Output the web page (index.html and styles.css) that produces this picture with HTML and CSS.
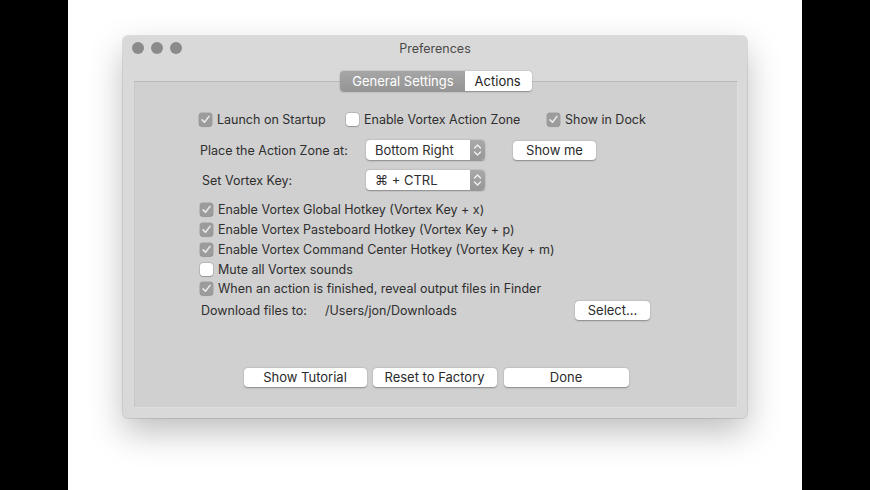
FILE: index.html
```html
<!DOCTYPE html>
<html>
<head>
<meta charset="utf-8">
<link rel="stylesheet" href="styles.css">
</head>
<body>
<div class="stage">
  <div class="bar"></div>
  <div class="desk">
    <div class="window">
      <div class="titlebar">
        <div class="lights"><span class="light"></span><span class="light"></span><span class="light"></span></div>
        <div class="title">Preferences</div>
      </div>
      <div class="tabbox">
        <div class="segmented">
          <span class="seg seg-on">General Settings</span><span class="seg">Actions</span>
        </div>
        <div class="row row1">
          <label class="check c1"><span class="box on"><svg viewBox="0 0 14 14"><path d="M3.3 7.4 L5.9 10 L10.8 3.6" /></svg></span>Launch on Startup</label>
          <label class="check c2"><span class="box"></span>Enable Vortex Action Zone</label>
          <label class="check"><span class="box on"><svg viewBox="0 0 14 14"><path d="M3.3 7.4 L5.9 10 L10.8 3.6" /></svg></span>Show in Dock</label>
        </div>
        <div class="row row2">
          <span class="label l-zone">Place the Action Zone at:</span>
          <span class="popup"><span class="popup-text">Bottom Right</span><span class="stepper"><svg viewBox="0 0 15 20"><path d="M4.5 8 L7.5 5 L10.5 8 M4.5 12 L7.5 15 L10.5 12"/></svg></span></span>
          <span class="btn btn-show">Show me</span>
        </div>
        <div class="row row3">
          <span class="label l-key">Set Vortex Key:</span>
          <span class="popup"><span class="popup-text">⌘ + CTRL</span><span class="stepper"><svg viewBox="0 0 15 20"><path d="M4.5 8 L7.5 5 L10.5 8 M4.5 12 L7.5 15 L10.5 12"/></svg></span></span>
        </div>
        <div class="list">
          <label class="check lrow"><span class="box on"><svg viewBox="0 0 14 14"><path d="M3.3 7.4 L5.9 10 L10.8 3.6" /></svg></span>Enable Vortex Global Hotkey (Vortex Key + x)</label>
          <label class="check lrow"><span class="box on"><svg viewBox="0 0 14 14"><path d="M3.3 7.4 L5.9 10 L10.8 3.6" /></svg></span>Enable Vortex Pasteboard Hotkey (Vortex Key + p)</label>
          <label class="check lrow"><span class="box on"><svg viewBox="0 0 14 14"><path d="M3.3 7.4 L5.9 10 L10.8 3.6" /></svg></span>Enable Vortex Command Center Hotkey (Vortex Key + m)</label>
          <label class="check lrow"><span class="box"></span>Mute all Vortex sounds</label>
          <label class="check lrow"><span class="box on"><svg viewBox="0 0 14 14"><path d="M3.3 7.4 L5.9 10 L10.8 3.6" /></svg></span>When an action is finished, reveal output files in Finder</label>
        </div>
        <div class="row row-dl">
          <span class="label l-dl">Download files to:</span>
          <span class="path">/Users/jon/Downloads</span>
          <span class="btn btn-select">Select...</span>
        </div>
        <div class="actions">
          <span class="btn btn-a1">Show Tutorial</span>
          <span class="btn btn-a2">Reset to Factory</span>
          <span class="btn btn-a3">Done</span>
        </div>
      </div>
    </div>
  </div>
  <div class="bar"></div>
</div>
</body>
</html>
```

FILE: styles.css
```css
html, body {
  margin: 0;
  padding: 0;
  background: #ffffff;
}
body {
  font-family: Inter, "Liberation Sans", sans-serif;
  font-size: 12.5px;
  color: #2e2e2e;
}
.stage {
  display: flex;
  width: 870px;
  height: 490px;
  overflow: hidden;
}
.bar {
  width: 68px;
  flex: none;
  background: #000;
}
.desk {
  flex: 1;
  background: #fff;
  padding: 36px 0 0 55px;
  box-sizing: border-box;
}
.window {
  width: 624px;
  height: 382px;
  box-sizing: border-box;
  background: #d9d9d9;
  border-radius: 5px;
  box-shadow: 0 14px 34px rgba(0,0,0,0.26), 0 0 0 1px rgba(0,0,0,0.10);
  display: flex;
  flex-direction: column;
  padding: 0 9px 10px 11px;
}
.titlebar {
  height: 24px;
  display: flex;
  align-items: center;
  position: relative;
  margin: 0 -9px 0 -11px;
  padding-left: 9px;
}
.lights {
  display: flex;
  gap: 7px;
}
.light {
  width: 12px;
  height: 12px;
  border-radius: 50%;
  background: #8b8b8b;
}
.title {
  position: absolute;
  left: 0;
  right: 0;
  text-align: center;
  font-size: 12.5px;
  color: #4a4a4a;
  top: 5px;
}
.tabbox {
  margin-top: 21px;
  flex: 1;
  background: #d0d0d0;
  border-top: 1px solid #b9b9b9;
  border-left: 1px solid #c8c8c8;
  border-right: 1px solid #dedede;
  border-bottom: 1px solid #dedede;
  display: flex;
  flex-direction: column;
  padding-left: 64px;
}
.segmented {
  align-self: center;
  margin-left: -64px;
  margin-top: -11px;
  height: 20px;
  display: flex;
  border-radius: 4px;
  box-shadow: 0 0.5px 1.5px rgba(0,0,0,0.35);
  overflow: hidden;
}
.seg {
  background: #fff;
  color: #222;
  padding: 0 11px 0 10px;
  line-height: 20px;
  font-size: 13px;
}
.seg-on {
  background: linear-gradient(#a6a6a6, #959595);
  color: #fff;
  padding: 0 11px 0 12px;
}
.row {
  display: flex;
  align-items: center;
  height: 20px;
}
.row1 { margin-top: 18px; }
.row2 { margin-top: 11px; }
.row3 { margin-top: 10px; }
.check {
  display: flex;
  align-items: center;
  white-space: nowrap;
}
.c1 { width: 147px; }
.c2 { width: 201px; }
.box {
  width: 13px;
  height: 13px;
  box-sizing: border-box;
  border-radius: 3px;
  background: #fff;
  margin-right: 5px;
  box-shadow: 0 0 0 0.5px rgba(0,0,0,0.2), 0 0.5px 1px rgba(0,0,0,0.2);
  flex: none;
}
.box.on {
  background: #9c9c9c;
}
.box svg {
  width: 13px;
  height: 13px;
  display: block;
}
.box svg path {
  fill: none;
  stroke: #ededed;
  stroke-width: 1.6;
  stroke-linecap: round;
  stroke-linejoin: round;
}
.label {
  white-space: nowrap;
}
.l-zone { width: 166px; margin-left: 1px; }
.l-key { width: 164px; margin-left: 3px; }
.popup {
  width: 119px;
  height: 20px;
  border-radius: 4px;
  background: #fff;
  box-shadow: 0 0.5px 1.5px rgba(0,0,0,0.35);
  display: flex;
  overflow: hidden;
}
.popup-text {
  flex: 1;
  padding-left: 9px;
  line-height: 20px;
  font-size: 13px;
}
.stepper {
  width: 15px;
  background: linear-gradient(#a9a9a9, #979797);
}
.stepper svg {
  width: 15px;
  height: 20px;
  display: block;
}
.stepper path {
  fill: none;
  stroke: #f4f4f4;
  stroke-width: 1.3;
  stroke-linecap: round;
  stroke-linejoin: round;
}
.btn {
  height: 19px;
  line-height: 19px;
  background: #fff;
  border-radius: 4px;
  box-shadow: 0 0.5px 1.5px rgba(0,0,0,0.35);
  text-align: center;
  font-size: 13px;
  color: #2a2a2a;
  display: inline-block;
  box-sizing: border-box;
}
.btn-show {
  width: 83px;
  margin-left: 28px;
}
.list {
  margin-top: 10px;
  display: flex;
  flex-direction: column;
}
.lrow {
  height: 19.75px;
  padding-left: 1px;
}
.row-dl {
  margin-top: 2px;
  height: 20px;
}
.l-dl { width: 124px; margin-left: 2px; }
.path { width: 250px; }
.btn-select { width: 75px; }
.actions {
  margin-top: auto;
  margin-bottom: 20px;
  margin-left: -64px;
  display: flex;
  justify-content: center;
  gap: 6px;
}
.btn-a1 { width: 123px; }
.btn-a2 { width: 124px; }
.btn-a3 { width: 125px; margin-left: 1px; }
```
